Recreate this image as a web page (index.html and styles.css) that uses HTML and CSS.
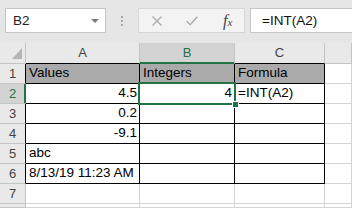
FILE: index.html
```html
<!DOCTYPE html>
<html>
<head>
<meta charset="utf-8">
<link rel="stylesheet" href="styles.css">
</head>
<body>
<div class="app">
  <div class="fbar">
    <div class="namebox"><span>B2</span><span class="caret"></span></div>
    <div class="grip"><i></i><i></i><i></i></div>
    <div class="btns">
      <svg class="ic-x" width="10" height="10" viewBox="0 0 10 10"><path d="M0.5 0.5L9.5 9.5M9.5 0.5L0.5 9.5" stroke="#ababab" stroke-width="1.3" fill="none"/></svg>
      <svg class="ic-ok" width="12" height="10" viewBox="0 0 12 10"><path d="M0.7 5.2L4.2 8.8L11.3 0.8" stroke="#ababab" stroke-width="1.3" fill="none"/></svg>
      <span class="fx">f<span class="fxx">x</span></span>
    </div>
    <div class="input">=INT(A2)</div>
  </div>
  <div class="sheet">
    <div class="c h corner"><span class="tri"></span></div>
    <div class="c h blk">A</div>
    <div class="c h hs blk">B</div>
    <div class="c h blk">C</div>
    <div class="c h"></div>

    <div class="c h rh blk">1</div>
    <div class="c b f">Values</div>
    <div class="c b f">Integers</div>
    <div class="c b f">Formula</div>
    <div class="c"></div>

    <div class="c h rh rs">2</div>
    <div class="c b r">4.5</div>
    <div class="c b r">4</div>
    <div class="c b">=INT(A2)</div>
    <div class="c"></div>

    <div class="c h rh blk">3</div>
    <div class="c b r">0.2</div>
    <div class="c b"></div>
    <div class="c b"></div>
    <div class="c"></div>

    <div class="c h rh blk">4</div>
    <div class="c b r">-9.1</div>
    <div class="c b"></div>
    <div class="c b"></div>
    <div class="c"></div>

    <div class="c h rh blk">5</div>
    <div class="c b">abc</div>
    <div class="c b"></div>
    <div class="c b"></div>
    <div class="c"></div>

    <div class="c h rh blk">6</div>
    <div class="c b">8/13/19 11:23 AM</div>
    <div class="c b"></div>
    <div class="c b"></div>
    <div class="c"></div>

    <div class="c h rh">7</div>
    <div class="c"></div>
    <div class="c"></div>
    <div class="c"></div>
    <div class="c"></div>

    <div class="c h rh"></div>
    <div class="c"></div>
    <div class="c"></div>
    <div class="c"></div>
    <div class="c"></div>

    <div class="sel"><span class="handle"></span></div>
  </div>
</div>
</body>
</html>
```

FILE: styles.css
```css
* { box-sizing: border-box; margin: 0; padding: 0; }
html, body { width: 352px; height: 208px; overflow: hidden; }
body { background: #fff; font-family: "Liberation Sans", Arial, sans-serif; color: #000; }

.fbar {
  height: 43px;
  background: #e6e6e6;
  display: flex;
  align-items: flex-start;
  padding: 8px 0 0 5px;
}
.namebox {
  width: 101px; height: 25px;
  background: #fff;
  border: 1px solid #c6c6c6;
  display: flex; align-items: center; justify-content: space-between;
  padding: 0 6px 0 7px;
  font-size: 13.5px; color: #222;
}
.caret {
  width: 0; height: 0;
  border-left: 4px solid transparent;
  border-right: 4px solid transparent;
  border-top: 4px solid #7a7a7a;
}
.grip {
  width: 32px; height: 25px;
  display: flex; flex-direction: column; align-items: center; justify-content: center;
  gap: 2px;
}
.grip i { display: block; width: 2px; height: 2px; background: #a9a9a9; }
.btns {
  width: 107px; height: 25px;
  background: #f3f3f3;
  border: 1px solid #d6d6d6;
  display: flex; align-items: center;
  padding-left: 13px;
}
.ic-ok { margin-left: 24px; }
.fx {
  margin-left: 25px;
  font-family: "Liberation Serif", "Times New Roman", serif;
  font-style: italic;
  font-size: 16px;
  color: #444;
  line-height: 1;
}
.fxx { font-size: 11px; }
.input {
  flex: 1; height: 25px;
  margin-left: 5px;
  background: #fff;
  border: 1px solid #c6c6c6; border-right: none;
  padding-left: 11px;
  font-size: 13.5px; line-height: 23px; color: #111;
}

.sheet {
  position: relative;
  display: grid;
  grid-template-columns: 26px 114px 95px 90px 1fr;
  grid-template-rows: 21px repeat(7, 20px) 4px;
}
.c {
  border-right: 1px solid #d4d4d4;
  border-bottom: 1px solid #d4d4d4;
  font-size: 13.5px;
  line-height: 16px;
  padding: 0 2px 2px 3px;
  display: flex; align-items: flex-end;
  white-space: nowrap;
}
.h {
  background: #e9e9e9;
  border-color: #c4c4c4;
  color: #444;
  font-size: 13px;
  justify-content: center;
  align-items: center;
  padding: 0;
}
.corner { justify-content: flex-end; align-items: flex-end; padding: 0 3px 4px 0; }
.tri {
  width: 0; height: 0;
  border-left: 10px solid transparent;
  border-bottom: 11px solid #b5b5b5;
}
.hs {
  background: #d3d3d3;
  color: #217346;
  border-bottom-color: #217346 !important;
  box-shadow: inset 0 -1px 0 #217346;
}
.rs {
  background: #d3d3d3;
  color: #217346;
  border-right-color: #217346;
  box-shadow: inset -1px 0 0 #217346;
}
.h.blk { border-bottom-color: #000; }
.rh.blk { border-right-color: #000; border-bottom-color: #c4c4c4; }
.b { border-color: #000; }
.f { background: #aaaaaa; }
.r { justify-content: flex-end; padding-right: 2px; }

.sel {
  position: absolute;
  left: 138px; top: 39px;
  width: 98px; height: 23px;
  border: 2px solid #217346;
}
.handle {
  position: absolute;
  right: -5px; bottom: -5px;
  width: 7px; height: 7px;
  background: #217346;
  border: 1px solid #fff;
}
```
